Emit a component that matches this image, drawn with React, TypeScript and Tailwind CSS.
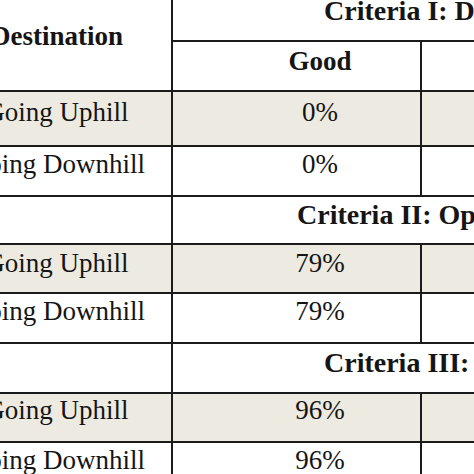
const SHADE = "bg-[#edeae1]";

function Cell({
    children,
    className = "",
    bg = "bg-white",
    pad = "pt-[5px]",
}: {
    children?: React.ReactNode;
    className?: string;
    bg?: string;
    pad?: string;
}) {
    return (
        <div className={`flex justify-center ${bg} ${pad} ${className}`}>
            {children != null && (
                <span className="inline-block origin-center scale-y-105 whitespace-nowrap leading-none">
                    {children}
                </span>
            )}
        </div>
    );
}

function Heading({ children, pad }: { children: React.ReactNode; pad: string }) {
    return (
        <div className={`col-span-2 flex bg-white ${pad}`}>
            <span className="inline-block whitespace-nowrap text-[28px] font-bold leading-none">
                {children}
            </span>
        </div>
    );
}

function DataRows({ value, shadeTop }: { value: string; shadeTop: string }) {
    return (
        <>
            <Cell bg={SHADE} pad={shadeTop}>
                Going Uphill
            </Cell>
            <Cell bg={SHADE} className="pl-[47px]" pad={shadeTop}>
                {value}
            </Cell>
            <Cell bg={SHADE} pad={shadeTop} />
            <Cell pad="pt-[4px]">Going Downhill</Cell>
            <Cell className="pl-[47px]" pad="pt-[4px]">
                {value}
            </Cell>
            <Cell pad="pt-[4px]" />
        </>
    );
}

export default function App() {
    return (
        <div className="h-[474px] w-[474px] overflow-hidden bg-white font-['Liberation_Serif',serif] text-[27px] text-[#151515]">
            <div className="-ml-[59px] -mt-[10px] grid w-[780px] grid-cols-[228px_247px_282px] grid-rows-[48px_48px_53px_48px_46px_47px_48px_48px_47px_48px] gap-[2px] bg-[#1b1b1b] p-[2px]">
                <div className="row-span-2 flex justify-center bg-white pt-[32px]">
                    <span className="inline-block scale-y-105 whitespace-nowrap font-bold leading-none">
                        Destination
                    </span>
                </div>
                <Heading pad="pl-[151px] pt-[5px]">Criteria I: Distance</Heading>

                <Cell className="pl-[47px] font-bold" pad="pt-[6px]">
                    Good
                </Cell>
                <Cell />

                <DataRows value="0%" shadeTop="pt-[7px]" />

                <Cell />
                <Heading pad="pl-[124px] pt-[4px]">Criteria II: Operation</Heading>

                <DataRows value="79%" shadeTop="pt-[5px]" />

                <Cell />
                <Heading pad="pl-[151px] pt-[5px]">Criteria III: Safety</Heading>

                <DataRows value="96%" shadeTop="pt-[3px]" />
            </div>
        </div>
    );
}
